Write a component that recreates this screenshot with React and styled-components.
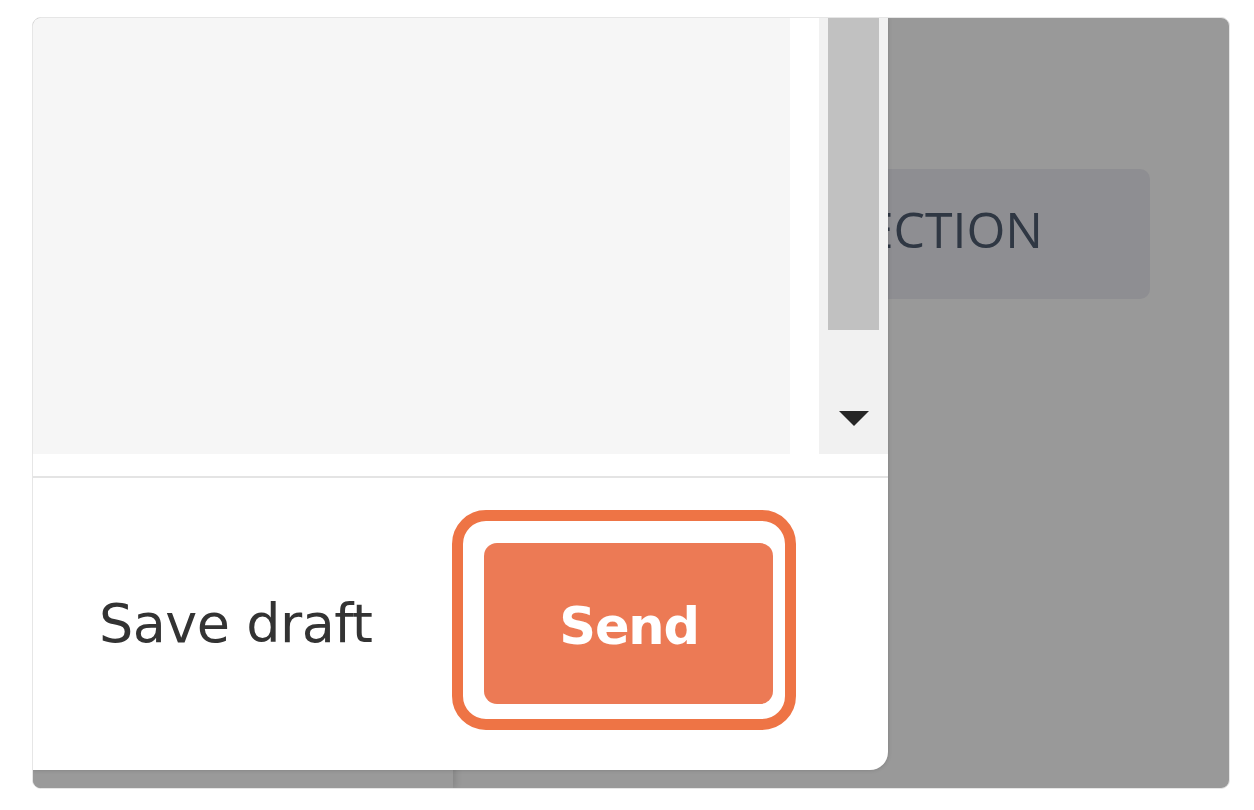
import React from "react";
import styled, { createGlobalStyle } from "styled-components";

const GlobalStyle = createGlobalStyle`
  html, body {
    margin: 0;
    padding: 0;
    background: #ffffff;
  }
  * {
    box-sizing: border-box;
  }
`;

const Frame = styled.div`
  position: relative;
  margin: 17px 0 0 32px;
  width: 1198px;
  height: 772px;
  border: 1px solid #e6e6e6;
  border-radius: 9px;
  overflow: hidden;
  background: #999999;
`;

const Backdrop = styled.div`
  display: flex;
  height: 100%;
`;

const Sidebar = styled.div`
  width: 420px;
  height: 100%;
  background: #9a9a9a;
  box-shadow: 3px 0 6px rgba(0, 0, 0, 0.12);
`;

const Main = styled.div`
  flex: 1;
  display: flex;
  justify-content: flex-end;
  align-items: flex-start;
  padding: 151px 79px 0 0;
`;

const GhostButton = styled.div`
  height: 130px;
  width: 560px;
  border-radius: 10px;
  background: #8e8e92;
  display: flex;
  align-items: center;
  justify-content: flex-end;
  padding: 0 107px 10px 0;
  font-family: "Open Sans", "Liberation Sans", sans-serif;
  font-size: 50px;
  color: #2f3743;
`;

const Modal = styled.div`
  position: absolute;
  top: 0;
  left: 0;
  width: 855px;
  height: 752px;
  background: #ffffff;
  border-bottom-right-radius: 18px;
  box-shadow: 0 0 4px rgba(0, 0, 0, 0.18);
  display: flex;
  flex-direction: column;
`;

const EditorRow = styled.div`
  display: flex;
  height: 436px;
  gap: 29px;
`;

const Editor = styled.div`
  flex: 1;
  background: #f6f6f6;
`;

const Scrollbar = styled.div`
  width: 69px;
  background: #f1f1f1;
  display: flex;
  flex-direction: column;
  align-items: center;
`;

const Thumb = styled.div`
  width: 51px;
  height: ${(p) => p.$size}px;
  background: #c1c1c1;
`;

const ArrowDown = styled.div`
  margin-top: auto;
  margin-bottom: 28px;
  width: 0;
  height: 0;
  border-left: 15px solid transparent;
  border-right: 15px solid transparent;
  border-top: 15px solid #262626;
`;

const Divider = styled.div`
  margin-top: 22px;
  height: 2px;
  background: #e4e4e4;
`;

const Footer = styled.div`
  flex: 1;
  display: flex;
  align-items: center;
  padding-left: 66px;
  padding-bottom: 8px;
`;

const TextButton = styled.button`
  border: none;
  background: none;
  padding: 6px 0 0 0;
  font-family: "DejaVu Sans", "Noto Sans", sans-serif;
  font-size: 54px;
  letter-spacing: -0.5px;
  color: #333333;
  cursor: pointer;
`;

const FocusRing = styled.div`
  margin-left: 79px;
  border: 11px solid #ee7445;
  border-radius: 34px;
  padding: 22px 12px 15px 21px;
`;

const PrimaryButton = styled.button`
  width: 289px;
  height: 161px;
  border: none;
  border-radius: 13px;
  background: #ec7a55;
  color: #ffffff;
  font-family: "DejaVu Sans", "Noto Sans", sans-serif;
  font-weight: 700;
  font-size: 51px;
  letter-spacing: -1.2px;
  display: flex;
  align-items: center;
  justify-content: center;
  padding: 5px 0 0 2px;
  cursor: pointer;
`;

export default function App() {
  return (
    <>
      <GlobalStyle />
      <Frame>
        <Backdrop>
          <Sidebar />
          <Main>
            <GhostButton>SELECTION</GhostButton>
          </Main>
        </Backdrop>
        <Modal>
          <EditorRow>
            <Editor />
            <Scrollbar>
              <Thumb $size={312} />
              <ArrowDown />
            </Scrollbar>
          </EditorRow>
          <Divider />
          <Footer>
            <TextButton>Save draft</TextButton>
            <FocusRing>
              <PrimaryButton>Send</PrimaryButton>
            </FocusRing>
          </Footer>
        </Modal>
      </Frame>
    </>
  );
}
